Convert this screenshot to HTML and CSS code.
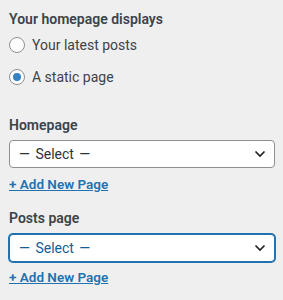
FILE: index.html
```html
<!DOCTYPE html>
<html>
<head>
<meta charset="utf-8">
<link rel="stylesheet" href="styles.css">
</head>
<body>
<div class="panel">
  <fieldset class="group">
    <legend class="heading">Your homepage displays</legend>
    <label class="radio"><span class="dot"></span>Your latest posts</label>
    <label class="radio"><span class="dot checked"></span>A static page</label>
  </fieldset>
  <div class="field first">
    <div class="label">Homepage</div>
    <div class="select"><span class="val">— Select —</span>
      <svg class="chev" width="12" height="8" viewBox="0 0 12 8"><path d="M1.5 1.5 L6 6 L10.5 1.5" fill="none" stroke="#1e1e1e" stroke-width="1.6"/></svg>
    </div>
    <a class="add" href="#">+ Add New Page</a>
  </div>
  <div class="field second">
    <div class="label">Posts page</div>
    <div class="select focus"><span class="val">— Select —</span>
      <svg class="chev" width="12" height="8" viewBox="0 0 12 8"><path d="M1.5 1.5 L6 6 L10.5 1.5" fill="none" stroke="#1e1e1e" stroke-width="1.6"/></svg>
    </div>
    <a class="add" href="#">+ Add New Page</a>
  </div>
</div>
</body>
</html>
```
FILE: styles.css
```css
html, body { margin: 0; padding: 0; }
body {
  background: #efefef;
  font-family: Roboto, Inter, sans-serif;
  font-size: 14px;
  color: #3c434a;
}
.panel { padding: 10px 8px 0 9px; }
.group { border: 0; margin: 0; padding: 0; }
.heading {
  padding: 0;
  font-weight: 600;
  font-size: 14px;
  line-height: 18px;
  color: #3c434a;
}
.radio {
  display: flex;
  align-items: center;
  gap: 7px;
  height: 16px;
  margin-top: 9px;
  color: #3c434a;
}
.radio + .radio { margin-top: 16px; }
.dot {
  width: 14px; height: 14px;
  border: 1px solid #8c8f94;
  border-radius: 50%;
  background: #fff;
  display: flex; align-items: center; justify-content: center;
  flex: none;
}
.dot.checked::after {
  content: "";
  width: 8px; height: 8px; border-radius: 50%;
  background: #3582c4;
}
.field { display: flex; flex-direction: column; }
.field.first { margin-top: 31px; }
.field.second { margin-top: 17px; }
.label {
  font-weight: 600;
  line-height: 18px;
  color: #3c434a;
}
.select {
  margin-top: 6px;
  box-sizing: border-box;
  width: 266px;
  height: 28px;
  border: 1px solid #8c8f94;
  border-radius: 4px;
  background: #fff;
  display: flex;
  align-items: center;
  justify-content: space-between;
  padding: 0 8px 0 8px;
  color: #2c3338;
}
.val { word-spacing: 2px; padding-left: 1px; }
.select.focus {
  margin-top: 7px;
  border-color: #2271b1;
  box-shadow: 0 0 0 1px #2271b1;
  color: #135e96;
}
.add {
  margin-top: 8px;
  color: #2271b1;
  font-weight: 600;
  font-size: 13.5px;
  line-height: 16px;
  text-decoration: underline;
  align-self: flex-start;
}
.select.focus + .add { margin-top: 7px; }
```
